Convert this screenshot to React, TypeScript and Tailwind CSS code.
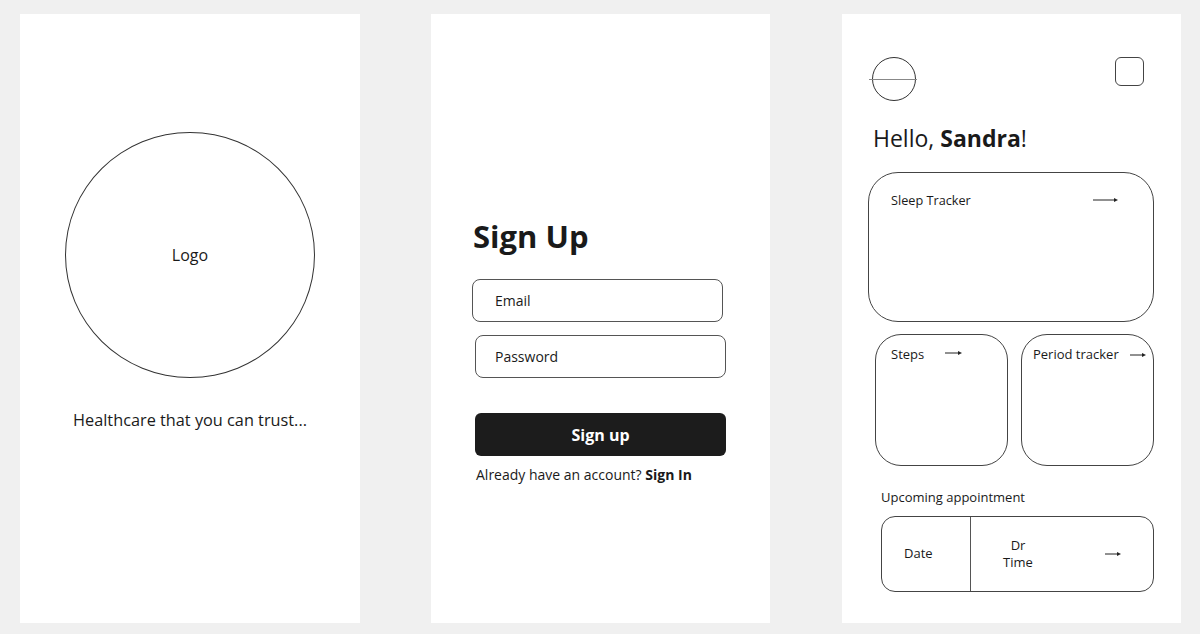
const font = { fontFamily: '"Open Sans", "Noto Sans", sans-serif' };

function Arrow({ w = 24 }: { w?: number }) {
  return (
    <svg width={w} height="6" viewBox={`0 0 ${w} 6`} fill="none">
      <path d={`M0 3H${w - 2}`} stroke="#222" strokeWidth="1" />
      <path d={`M${w - 4} 1L${w} 3L${w - 4} 5Z`} fill="#222" />
    </svg>
  );
}

function Splash() {
  return (
    <div className="flex h-[609px] w-[340px] flex-col items-center bg-white pt-[118px]">
      <div className="flex h-[246px] w-[250px] items-center justify-center rounded-[50%] border border-[#333]">
        <span className="text-[16px] text-[#1a1a1a]">Logo</span>
      </div>
      <p className="mt-[30px] text-[16.3px] leading-[24px] text-[#1a1a1a]">Healthcare that you can trust...</p>
    </div>
  );
}

function SignUp() {
  return (
    <div className="flex h-[609px] w-[339px] flex-col bg-white pt-[201px] text-[#1a1a1a]">
      <h1 className="ml-[42px] text-[31px] font-bold leading-[42px]">Sign Up</h1>
      <div className="ml-[41px] mt-[22px] flex h-[43px] w-[251px] items-center rounded-[8px] border border-[#555] pl-[22px] text-[14px]">
        Email
      </div>
      <div className="ml-[44px] mt-[13px] flex h-[43px] w-[251px] items-center rounded-[8px] border border-[#555] pl-[19px] text-[14px]">
        Password
      </div>
      <button className="ml-[44px] mt-[35px] flex h-[43px] w-[251px] items-center justify-center rounded-[6px] bg-[#1c1c1c] text-[16px] font-bold text-white">
        Sign up
      </button>
      <p className="ml-[45px] mt-[9px] text-[14px] leading-[20px]">
        Already have an account? <span className="font-bold">Sign In</span>
      </p>
    </div>
  );
}

function Dashboard() {
  return (
    <div className="flex h-[609px] w-[339px] flex-col bg-white pt-[43px] text-[#1a1a1a]">
      <div className="flex items-start justify-between pl-[27px] pr-[37px]">
        <div className="relative h-[44px] w-[48px]">
          <div className="absolute left-[3px] top-0 h-[44px] w-[44px] rounded-full border border-[#333]" />
          <div className="absolute left-0 top-[22px] h-px w-[48px] bg-[#888]" />
        </div>
        <div className="h-[29px] w-[29px] rounded-[6px] border border-[#444]" />
      </div>
      <h2 className="ml-[31px] mt-[21px] text-[23px] leading-[32px]">
        Hello, <span className="font-bold">Sandra</span>!
      </h2>
      <div className="ml-[26px] mt-[18px] flex h-[150px] w-[286px] items-start justify-between rounded-[30px] border border-[#444] pl-[22px] pr-[35px] pt-[17px]">
        <span className="text-[12.7px] leading-[20px]">Sleep Tracker</span>
        <span className="mt-[7px]"><Arrow w={25} /></span>
      </div>
      <div className="ml-[33px] mt-[12px] flex gap-[13px]">
        <div className="flex h-[132px] w-[133px] items-start gap-[21px] rounded-[26px] border border-[#444] pl-[15px] pt-[9px]">
          <span className="text-[13px] leading-[20px]">Steps</span>
          <span className="mt-[6px]"><Arrow w={17} /></span>
        </div>
        <div className="flex h-[132px] w-[133px] items-start justify-between rounded-[26px] border border-[#444] pl-[11px] pr-[7px] pt-[9px]">
          <span className="text-[13px] leading-[20px]">Period tracker</span>
          <span className="mt-[8px]"><Arrow w={16} /></span>
        </div>
      </div>
      <p className="ml-[39px] mt-[21px] text-[13px] leading-[20px]">Upcoming appointment</p>
      <div className="ml-[39px] mt-[9px] flex h-[76px] w-[273px] rounded-[14px] border border-[#444]">
        <div className="flex w-[89px] items-center border-r border-[#555] pl-[22px] text-[13px]">Date</div>
        <div className="flex flex-1 items-center">
          <div className="ml-[30px] flex w-[34px] flex-col items-center text-[13px] leading-[17px]">
            <span>Dr</span>
            <span>Time</span>
          </div>
          <span className="ml-[70px]"><Arrow w={16} /></span>
        </div>
      </div>
    </div>
  );
}

export default function App() {
  return (
    <div className="flex h-[634px] w-[1200px] gap-[71px] bg-[#f0f0f0] pl-[20px] pt-[14px]" style={font}>
      <Splash />
      <SignUp />
      <div className="ml-[1px]">
        <Dashboard />
      </div>
    </div>
  );
}
